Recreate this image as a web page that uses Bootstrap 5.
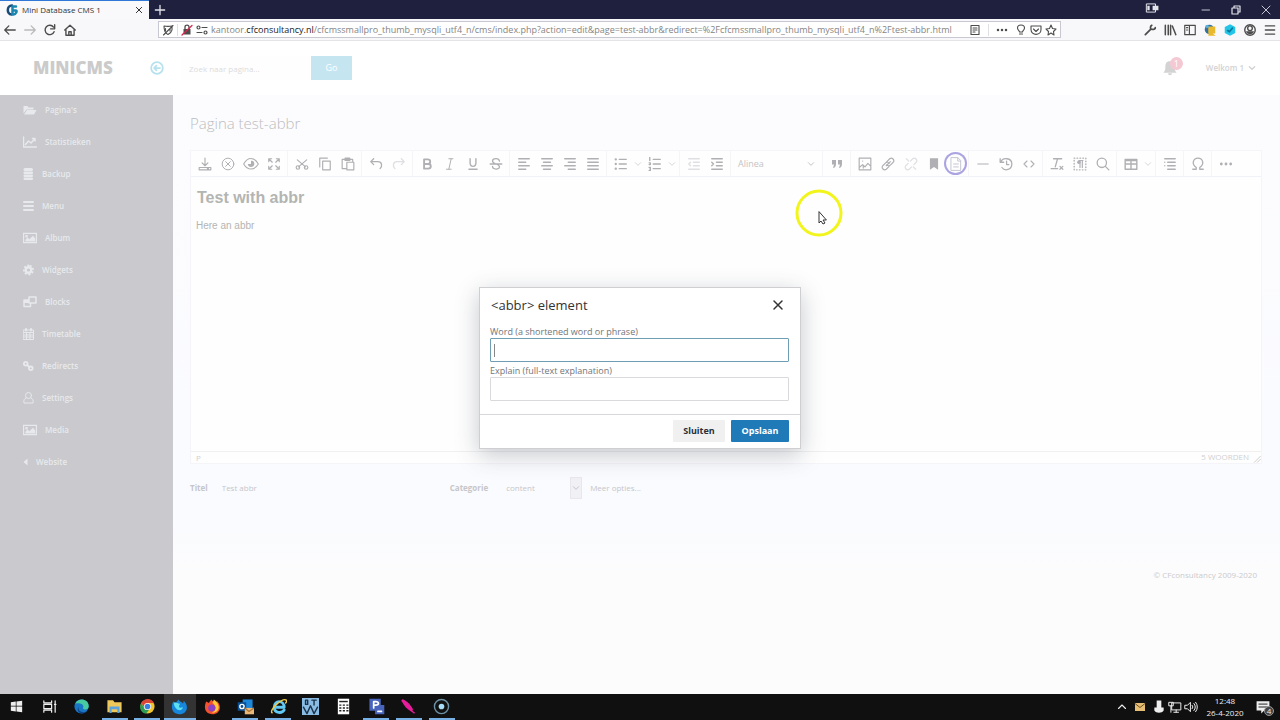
<!DOCTYPE html>
<html lang="nl">
<head>
<meta charset="utf-8">
<meta name="viewport" content="width=device-width, initial-scale=1">
<title>Mini Database CMS 1</title>
<link href="https://cdn.jsdelivr.net/npm/bootstrap@5.3.0/dist/css/bootstrap.min.css" rel="stylesheet">
<style>
body{font:10px/14px "Open Sans","Noto Sans",sans-serif;background:#fcfcfe;color:#444}
button,input,select{font:inherit;color:inherit}
button{background:none;border:0;padding:0;display:inline-flex;align-items:center;justify-content:center}
a{color:inherit;text-decoration:none}
svg{display:block;flex:none;stroke-linecap:round;stroke-linejoin:round}
svg:not([fill]){fill:none}
svg:not([stroke]){stroke:currentColor}
svg:not([stroke-width]){stroke-width:1.7}
svg .solid{fill:currentColor;stroke:none}
.i8{width:8px;height:8px}.i12{width:12px;height:12px}.i14{width:14px;height:14px}.i16{width:16px;height:16px}
/* browser */
.tabstrip{background:#1f203d;height:19px;color:#e4e4ec}
.tab-active{width:149px;background:#f9f9fb;border-top:1px solid #2f78d8;color:#333;font-size:8px;padding:0 6px}
.win-ctl{gap:16px;padding-right:7px}
.win-ctl button{width:14px}
.addressbar{background:#f8f8fa;height:22px;border-bottom:1px solid #e4e4e8;color:#4c4c4c}
.nav-btns{width:158px;gap:6px;padding-left:3px}
.urlbox{width:903px;height:17px;background:#fff;border:1px solid #c8c8d0;gap:3px;padding:0 3px}
.url-text{color:#858585;white-space:nowrap;overflow:hidden;line-height:15px;font-size:9px}
.url-text b{font-weight:400;color:#222}
.addon-btns{gap:6px;padding-right:3px}
.sep{width:1px;height:12px;background:#e0e0e4}
/* cms */
.cms-head{height:54px;background:#fff;color:#d2d2d4}
.brand{width:173px;padding:0 9px 0 33px;font-size:17px;font-weight:800;line-height:20px;color:#cbcbcb}
.find-box{width:130px;height:24px;border:0;background:#fefefe;padding:0 8px;font-size:8px}
.find-box::placeholder{color:#dcdcdc;opacity:1}
.go-btn{width:41px;height:24px;background:#c5e6f1;color:#fff;font-size:9px}
.bell{color:#d3d3d3}
.bell-count{top:-3px;right:-5px;width:13px;height:13px;border-radius:50%;background:#f5c9d4;color:#fff;font-size:9px;line-height:13px;text-align:center}
.welcome{font-size:8px;font-weight:600}
.side{width:173px;background:#c9c9ce;color:#e7e9ed}
.side a{height:32px;padding:0 0 3px 23px;gap:8px;display:flex;align-items:center;font-size:8px;font-weight:600}
.side svg{height:12px}
.w5{width:5px}.w11{width:11px}.w14{width:14px}
.main{padding:0 18px 0 17px;background:linear-gradient(#fcfcfe 0,#fafbfe 350px,#fafbfe 430px,#fcfcfd 480px)}
.page-title{font-size:15px;line-height:20px;font-weight:300;color:#bcbcc0;margin:18px 0 17px}
.editor{background:#fefefe;border:1px solid #f5f5f9}
.tools{height:26px;border-bottom:1px solid #f1f2f7;color:#b0b0b4}
.grp{display:flex;height:25px;padding:0 2px;border-right:1px solid #f5f5f8}
.grp:last-child{border:0}
.grp button{width:23px}
.grp .arr{width:11px;color:#d8d8dc}
.grp .dim{color:#dfdfe3}
.grp .block-pick{width:87px;padding:0 5px;color:#c4c4c8;justify-content:space-between;font-size:9px}
.grp .ring-btn{box-shadow:0 0 0 2px #aba3e2;border-radius:50%;width:19px;height:19px;margin:3px 1px}
.doc-area{min-height:274px;padding:11px 5px;font-family:"Liberation Sans",Arial,sans-serif;color:#b4b4b4}
.doc-area h2{font-size:16px;line-height:20px;font-weight:700;margin:0 0 11px 1px;color:#b3b5b2}
.doc-area p{margin:0;line-height:13px}
.statusbar{height:12px;border-top:1px solid #f0f0f0;color:#d0d0d2;font-size:8px;line-height:12px;padding:0 0 0 5px}
.meta{margin-top:12px;height:24px;color:#c6c6ca;font-size:8px}
.meta label{font-weight:700}
.meta input,.meta select{border:0;background:transparent;outline:0;padding:0 10px}
.meta select{appearance:none}
.meta .title-in{width:238px}.meta .cat-in{width:82px;padding:0 18px}
.cat-arr{width:12px;height:22px;background:#f1f1f5;border:1px solid #e7e7ed}
.foot{color:#cbcbce;font-size:8px;margin-top:68px;padding-right:5px}
/* dialog */
.veil{inset:0;pointer-events:none}
.dlg{width:322px;background:#fff;border:1px solid #cfcfd2;box-shadow:0 6px 22px rgba(50,60,80,.28);pointer-events:auto}
.dlg-head{height:38px;padding:1px 16px 5px 11px;color:#333}
.dlg-head h1{font-size:13px;line-height:18px;font-weight:400;margin:0}
.dlg-body{padding:0 11px 13px 10px;color:#70757b}
.dlg-body label{display:block;font-size:9px;line-height:12px}
.dlg-body input{display:block;width:100%;height:24px;border:1px solid #dadade;border-radius:1px;outline:0;margin-bottom:3px;padding:0 4px}
.dlg-body input:last-child{margin:0}
.dlg-body .active-in{border-color:#6f9db4;caret-color:transparent;background:linear-gradient(#888,#888) 3px 5px/1px 13px no-repeat}
.dlg-foot{border-top:1px solid #d8d8dc;height:34px;padding-right:11px;gap:6px}
.dlg-foot button{height:22px;font-size:9px;font-weight:700;border-radius:1px;color:#2c2f36}
.close-btn{width:52px;background:#f0f0f1}
.dlg-foot .save-btn{width:58px;background:#207ab7;color:#fff}
.halo{left:795px;top:148px}
/* taskbar */
.taskbar{height:26px;background:#101010;color:#eee}
.apps{width:458px}
.apps button{flex:1;border-bottom:2px solid transparent}
.apps svg{width:17px;height:17px}
.apps .run{background:linear-gradient(#76b0e4,#76b0e4) center bottom/26px 2px no-repeat;background-origin:border-box;background-clip:border-box}
.apps .run.cur{background-color:#333;background-size:100% 2px}
.tray{gap:2px;padding-right:10px;font-size:8px}
.clock{width:50px;line-height:12px;text-align:center}
.note-count{right:-4px;bottom:-2px;width:10px;height:10px;border-radius:50%;background:#444;border:1px solid #999;font-size:8px;line-height:8px;text-align:center}
</style>
</head>
<body>
<svg class="d-none">
<symbol id="x" viewBox="0 0 24 24"><path d="M4 4l16 16M20 4L4 20"/></symbol>
<symbol id="down" viewBox="0 0 24 24"><path d="M4 8l8 8 8-8"/></symbol>
<symbol id="pic" viewBox="0 0 24 20"><path class="solid" fill-rule="evenodd" d="M0 1h24v18H0zM2 3v14h20V3zM4 16v-3l4-4 3 3 6-6 4 5v5zM4 5h4v4H4z"/></symbol>
</svg>
<div class="d-flex flex-column min-vh-100">
<header>
 <div class="tabstrip d-flex">
  <div class="tab-active d-flex align-items-center">
   <svg class="i12 me-1" viewBox="0 0 24 24" stroke-width="4"><path stroke="#174a78" stroke-width="5" d="M12 3C1 3 1 21 11 21"/><path stroke="#1b87b0" stroke-width="5" d="M13 21V5h7M14 13h6c3 0 0 8-5 8"/></svg>
   <span class="flex-fill">Mini Database CMS 1</span>
   <button aria-label="Tabblad sluiten"><svg class="i8" stroke-width="3"><use href="#x"/></svg></button>
  </div>
  <button class="px-1" aria-label="Nieuw tabblad"><svg class="i14" viewBox="0 0 24 24" stroke-width="2.2"><path d="M12 4v16M4 12h16"/></svg></button>
  <div class="win-ctl d-flex ms-auto align-items-center">
   <button class="me-4" aria-label="Schermopname"><svg class="i14 mb-1" viewBox="0 0 24 24"><path d="M3 5h15v14H3z"/><path class="solid" d="M13 8h10v8H13zM4 8h4v8H4z"/></svg></button>
   <button aria-label="Minimaliseren"><svg class="i12" viewBox="0 0 24 24"><path d="M4 12h15"/></svg></button>
   <button aria-label="Herstellen"><svg class="i12" viewBox="0 0 24 24" stroke-width="2.4"><path d="M4 8h12v12H4zM8 8V4h12v12h-4"/></svg></button>
   <button aria-label="Sluiten"><svg class="i12"><use href="#x"/></svg></button>
  </div>
 </div>
 <nav class="addressbar d-flex align-items-center">
  <div class="nav-btns d-flex">
   <button aria-label="Terug"><svg class="i14" viewBox="0 0 24 24" stroke-width="2.2"><path d="M21 12H4M10 5l-7 7 7 7"/></svg></button>
   <button aria-label="Vooruit" class="text-black-50 opacity-50"><svg class="i14" viewBox="0 0 24 24" stroke-width="2.2"><path d="M3 12h17M14 5l7 7-7 7"/></svg></button>
   <button aria-label="Vernieuwen"><svg class="i14" viewBox="0 0 24 24" stroke-width="2.4"><path d="M19 15a8 8 0 1 1-1-8M20 3v7h-7"/></svg></button>
   <button aria-label="Startpagina"><svg class="i14" viewBox="0 0 24 24" stroke-width="2.4"><path d="M3 12l9-8 9 8M5 11v10h14V11M10 21v-6h4v6"/></svg></button>
  </div>
  <div class="urlbox d-flex align-items-center">
   <svg class="i12" viewBox="0 0 24 24" stroke-width="2.2"><path d="M4 4c6 1 10 1 16 0v8c-1 5-4 7-8 9-5-2-8-6-8-17M3 22L22 3M7 9v4M16 9v5"/></svg>
   <span class="sep"></span>
   <svg class="i12" viewBox="0 0 24 24"><path class="solid" d="M5 10h14v11H5z"/><path stroke-width="2.6" d="M8 10V6c0-5 8-5 8 0v4"/><path stroke="#d7264c" stroke-width="2.6" d="M2 22L22 3"/></svg>
   <svg class="i12" viewBox="0 0 24 24" stroke-width="2.4"><circle cx="5" cy="7" r="3"/><path d="M12 7h10M2 17h10"/><circle cx="19" cy="17" r="3"/></svg>
   <div class="url-text flex-fill" role="textbox" aria-label="Adres" contenteditable="true" spellcheck="false">kantoor.<b>cfconsultancy.nl</b>/cfcmssmallpro_thumb_mysqli_utf4_n/cms/index.php?action=edit&amp;page=test-abbr&amp;redirect=%2Fcfcmssmallpro_thumb_mysqli_utf4_n%2Ftest-abbr.html</div>
   <svg class="i12" viewBox="0 0 24 24" stroke-width="2.2"><path d="M4 3h16v18H4zM8 8h8M8 12h8M8 16h4"/></svg>
   <span class="sep mx-1"></span>
   <svg class="i12" viewBox="0 0 24 24"><g class="solid"><circle cx="4" cy="12" r="2.5"/><circle cx="12" cy="12" r="2.5"/><circle cx="20" cy="12" r="2.5"/></g></svg>
   <svg class="i12 ms-1" viewBox="0 0 24 24" stroke-width="2.2"><path d="M9 16c0-3-4-4-4-8 0-8 14-8 14 0 0 4-4 5-4 8zM9 20h6"/></svg>
   <svg class="i12" viewBox="0 0 24 24" stroke-width="2.2"><path d="M2 4h20v7c0 13-20 13-20 0zM7 10l5 5 5-5"/></svg>
   <svg class="i12" viewBox="0 0 24 24" stroke-width="2.2"><path d="M12 2l3 7 7 1-5 5 1 7-6-4-6 4 1-7-5-5 7-1z"/></svg>
  </div>
  <div class="addon-btns d-flex ms-auto">
   <button aria-label="Ontwikkelaar"><svg class="i14" viewBox="0 0 24 24"><path stroke-width="3" d="M4 20L13 11"/><path stroke-width="3" d="M15 4c-3 2-3 7 0 7s6-1 6-3"/></svg></button>
   <button aria-label="Bibliotheek"><svg class="i14" viewBox="0 0 24 24" stroke-width="2.6"><path d="M4 4v16M9 4v16M13 4v16M16 5l6 15"/></svg></button>
   <button aria-label="Zijbalk"><svg class="i14" viewBox="0 0 24 24" stroke-width="2"><path d="M3 4h18v16H3zM11 4v16M6 8h2M6 12h2"/></svg></button>
   <button aria-label="Extensie"><svg class="i14" viewBox="0 0 24 24"><circle cx="11" cy="11" r="8" fill="#326fa3" stroke="none"/><path fill="#e9b92d" stroke="none" d="M9 6h12v12H9zM11 14l11 8H9z"/><circle cx="7" cy="6" r="3" fill="#5caed8" stroke="none"/></svg></button>
   <button aria-label="Hexagon"><svg class="i14" viewBox="0 0 24 24"><path fill="#22c4e8" stroke="none" d="M12 2l9 5v10l-9 5-9-5V7z"/><path stroke="#087a9e" stroke-width="3" d="M8 13l3 2 5-6"/></svg></button>
   <button aria-label="Account"><svg class="i14" viewBox="0 0 24 24" stroke-width="2.4"><circle cx="12" cy="12" r="9"/><path class="solid" d="M5 14h14c-2 7-12 7-14 0z"/><circle cx="12" cy="9" r="4"/></svg></button>
   <button aria-label="Menu"><svg class="i14" viewBox="0 0 24 24" stroke-width="2.2"><path d="M4 5h16M4 12h16M4 19h16"/></svg></button>
  </div>
 </nav>
</header>

<div class="position-relative flex-fill d-flex flex-column">
 <div class="cms-head d-flex align-items-center">
  <div class="brand d-flex align-items-center justify-content-between"><span>MINICMS</span>
   <svg class="i14" viewBox="0 0 24 24" stroke="#b6e1ee" stroke-width="3"><circle cx="12" cy="12" r="10"/><path d="M17 12H8M11 8l-4 4 4 4"/></svg></div>
  <form class="d-flex ms-2"><input class="find-box" aria-label="Zoeken" placeholder="Zoek naar pagina..."><button class="go-btn" type="button">Go</button></form>
  <div class="d-flex align-items-center ms-auto me-4">
   <div class="position-relative bell me-4"><svg class="i16" viewBox="0 0 24 24"><path class="solid" d="M12 2c6 0 7 4 7 10 0 3 1 5 3 7H2c2-2 3-4 3-7C5 6 6 2 12 2zM9 20h6c0 4-6 4-6 0z"/></svg><span class="bell-count position-absolute">1</span></div>
   <a href="#" class="welcome d-flex align-items-center gap-1 ps-1">Welkom 1 <svg class="i8" viewBox="0 0 24 24" stroke-width="4"><use href="#down"/></svg></a>
  </div>
 </div>
 <div class="d-flex flex-fill">
  <nav class="side flex-shrink-0">
   <a href="#"><svg class="w14" viewBox="0 0 28 24"><path class="solid" d="M1 4h8l2 3h10v4H7l-6 8zM8 12h19l-5 9H2z"/></svg>Pagina's</a>
   <a href="#"><svg class="w14" viewBox="0 0 28 24" stroke-width="3"><path d="M1 2v20h26M5 17l6-7 5 4 8-9M19 5h5v5"/></svg>Statistieken</a>
   <a href="#"><svg class="w11" viewBox="0 0 22 24"><g class="solid"><rect x="1" y="0" width="19" height="6" rx="3"/><rect x="1" y="7" width="19" height="5" rx="2"/><rect x="1" y="13" width="19" height="5" rx="2"/><rect x="1" y="19" width="19" height="5" rx="2"/></g></svg>Backup</a>
   <a href="#"><svg class="w11" viewBox="0 0 22 24" stroke-width="4"><path d="M2 4h18M2 12h18M2 20h18"/></svg>Menu</a>
   <a href="#"><svg class="w14"><use href="#pic"/></svg>Album</a>
   <a href="#"><svg class="w11" viewBox="0 0 24 24"><circle cx="12" cy="12" r="6" stroke-width="5"/><path stroke-width="4" stroke-dasharray="1 7" d="M12 2a10 10 0 1 0 .1 0"/></svg>Widgets</a>
   <a href="#"><svg class="w14" viewBox="0 0 28 24" stroke-width="3"><path d="M12 2h14v12H12zM12 8H2v13h13v-7"/><path class="solid" d="M2 8h10v6H2z"/></svg>Blocks</a>
   <a href="#"><svg class="w11" viewBox="0 0 22 24" stroke-width="2"><path d="M1 4h20v19H1zM1 9h20M1 14h20M1 18h20M7 9v14M14 9v14"/><path stroke-width="4" d="M6 2v3M16 2v3"/></svg>Timetable</a>
   <a href="#"><svg class="w11" viewBox="0 0 24 24" stroke-width="4"><circle cx="6" cy="7" r="4"/><circle cx="17" cy="17" r="4"/><path d="M9 10l5 4"/></svg>Redirects</a>
   <a href="#"><svg class="w11" viewBox="0 0 22 24" stroke-width="2"><circle cx="11" cy="7" r="6"/><path d="M6 12c-4 1-5 5-4 10h18c1-5 0-9-4-10"/></svg>Settings</a>
   <a href="#"><svg class="w14"><use href="#pic"/></svg>Media</a>
   <a href="#"><svg class="w5" viewBox="0 0 10 24"><path class="solid" d="M9 5v14L1 12z"/></svg>Website</a>
  </nav>
  <main class="main flex-fill">
   <h1 class="page-title">Pagina test-abbr</h1>
   <div class="editor">
    <div class="tools d-flex">
     <div class="grp">
      <button aria-label="Opslaan"><svg class="i14" viewBox="0 0 24 24" stroke-width="2"><path d="M12 2v13M7 10l5 5 5-5M2 18h20v4H2zM16 20h2"/></svg></button>
      <button aria-label="Annuleren"><svg class="i14" viewBox="0 0 24 24"><circle cx="12" cy="12" r="10"/><path d="M8 8l8 8M16 8l-8 8"/></svg></button>
      <button aria-label="Voorbeeld"><svg class="i16" viewBox="0 0 24 24"><path d="M1 12c6-11 16-11 22 0-6 10-16 10-22 0z"/><path class="solid" d="M12 7v5H7c1 7 10 5 10 0s-3-5-5-5z"/></svg></button>
      <button aria-label="Volledig scherm"><svg class="i14" viewBox="0 0 24 24" stroke-width="2"><path d="M3 8V3h5M3 3l6 6M16 3h5v5M21 3l-6 6M3 16v5h5M3 21l6-6M16 21h5v-5M21 21l-6-6"/></svg></button>
     </div>
     <div class="grp">
      <button aria-label="Knippen"><svg class="i14" viewBox="0 0 24 24" stroke-width="2"><path d="M4 5l14 12M20 5L6 17"/><circle cx="5" cy="18" r="3"/><circle cx="19" cy="18" r="3"/></svg></button>
      <button aria-label="Kopiëren"><svg class="i14" viewBox="0 0 24 24" stroke-width="2"><path d="M8 7h13v15H8zM3 17V2h13"/></svg></button>
      <button aria-label="Plakken"><svg class="i14" viewBox="0 0 24 24" stroke-width="2"><path d="M9 20H2V4h18v4M7 2h8v4H7zM10 9h12v13H10z"/></svg></button>
     </div>
     <div class="grp">
      <button aria-label="Ongedaan maken"><svg class="i14" viewBox="0 0 24 24" stroke-width="2.2"><path d="M8 3L3 8l5 5M3 8h12c8 0 8 8 4 12"/></svg></button>
      <button aria-label="Opnieuw" class="dim"><svg class="i14" viewBox="0 0 24 24" stroke-width="2.2"><path d="M16 3l5 5-5 5M21 8H9c-8 0-8 8-4 12"/></svg></button>
     </div>
     <div class="grp">
      <button aria-label="Vet"><svg class="i14" viewBox="0 0 24 24" stroke-width="3.2"><path d="M7 4h6c6 0 6 8 0 8H7zM7 12h7c6 0 6 8 0 8H7z"/></svg></button>
      <button aria-label="Cursief"><svg class="i14" viewBox="0 0 24 24"><path d="M10 3h7M14 3l-4 18M6 21h8"/></svg></button>
      <button aria-label="Onderstrepen"><svg class="i14" viewBox="0 0 24 24" stroke-width="2.4"><path d="M7 3v7c0 8 10 8 10 0V3M5 21h14"/></svg></button>
      <button aria-label="Doorhalen"><svg class="i14" viewBox="0 0 24 24" stroke-width="2.2"><path d="M18 7c-1-6-12-5-12 0 0 3 3 4 6 5s6 2 6 5c0 5-12 5-12-1M2 12h20"/></svg></button>
     </div>
     <div class="grp">
      <button aria-label="Links uitlijnen"><svg class="i14" viewBox="0 0 24 24" stroke-width="2.4"><path d="M3 3h18M3 9h12M3 15h18M3 21h12"/></svg></button>
      <button aria-label="Centreren"><svg class="i14" viewBox="0 0 24 24" stroke-width="2.4"><path d="M3 3h18M6 9h12M3 15h18M6 21h12"/></svg></button>
      <button aria-label="Rechts uitlijnen"><svg class="i14" viewBox="0 0 24 24" stroke-width="2.4"><path d="M3 3h18M9 9h12M3 15h18M9 21h12"/></svg></button>
      <button aria-label="Uitvullen"><svg class="i14" viewBox="0 0 24 24" stroke-width="2.4"><path d="M3 3h18M3 9h18M3 15h18M3 21h18"/></svg></button>
     </div>
     <div class="grp">
      <button aria-label="Opsomming"><svg class="i14" viewBox="0 0 24 24" stroke-width="2.4"><path d="M9 4h12M9 12h12M9 20h12"/><path stroke-width="4" d="M3 4h.1M3 12h.1M3 20h.1"/></svg></button>
      <button class="arr" aria-label="Opsommingsstijl"><svg class="i8" stroke-width="3"><use href="#down"/></svg></button>
      <button aria-label="Nummering"><svg class="i14" viewBox="0 0 24 24" stroke-width="2.4"><path d="M9 4h12M9 12h12M9 20h12M3 1v5M2 10h2v3H2M2 18h2v5H2"/></svg></button>
      <button class="arr" aria-label="Nummerstijl"><svg class="i8" stroke-width="3"><use href="#down"/></svg></button>
     </div>
     <div class="grp">
      <button class="dim" aria-label="Minder inspringen"><svg class="i14" viewBox="0 0 24 24" stroke-width="2.4"><path d="M3 3h18M11 9h10M11 15h10M3 21h18M6 9l-3 3 3 3"/></svg></button>
      <button aria-label="Inspringen"><svg class="i14" viewBox="0 0 24 24" stroke-width="2.4"><path d="M3 3h18M11 9h10M11 15h10M3 21h18M3 9l3 3-3 3"/></svg></button>
     </div>
     <div class="grp"><button class="block-pick">Alinea <svg class="i8" stroke-width="3"><use href="#down"/></svg></button></div>
     <div class="grp"><button aria-label="Citaat"><svg class="i12" viewBox="0 0 24 24"><path class="solid" d="M2 4h8v8c0 5-3 8-6 8l2-7H2zM14 4h8v8c0 5-3 8-6 8l2-7h-4z"/></svg></button></div>
     <div class="grp">
      <button aria-label="Afbeelding"><svg class="i14" viewBox="0 0 24 24" stroke-width="2"><path d="M2 2h20v20H2zM2 18l6-5 4 4 5-6 5 5M8 7h.1M9 14v5"/></svg></button>
      <button aria-label="Link"><svg class="i14" viewBox="0 0 24 24" stroke-width="2"><path d="M9 15l7-7M10 8l5-5c4-3 9 2 6 6l-5 5c-2 2-5 1-6-1M14 16l-5 5c-4 3-9-2-6-6l5-5c2-2 5-1 6 1"/></svg></button>
      <button class="dim" aria-label="Link verwijderen"><svg class="i14" viewBox="0 0 24 24" stroke-width="2"><path d="M11 7l4-4c4-3 9 2 6 6l-4 4M13 17l-4 4c-4 3-9-2-6-6l4-4M4 3l4 4M16 17l4 4"/></svg></button>
      <button aria-label="Bladwijzer"><svg class="i14" viewBox="0 0 24 24"><path class="solid" d="M5 2h14v20l-7-5-7 5z"/></svg></button>
      <button class="ring-btn" aria-label="Afkorting"><svg class="i14" viewBox="0 0 24 24" stroke="#c5c5d2"><path d="M4 1h11l5 5v17H4zM15 1v6h5M8 12h8M8 17h8"/></svg></button>
     </div>
     <div class="grp">
      <button aria-label="Lijn"><svg class="i14" viewBox="0 0 24 24"><path d="M3 12h18"/></svg></button>
      <button aria-label="Herstel concept"><svg class="i14" viewBox="0 0 24 24" stroke-width="2.2"><path d="M2 3v6h6M3 9c3-9 19-8 19 3 0 10-12 13-17 6M13 7v6h4"/></svg></button>
      <button aria-label="Broncode"><svg class="i12" viewBox="0 0 24 24" stroke-width="2.2"><path d="M8 6l-6 6 6 6M16 6l6 6-6 6"/></svg></button>
     </div>
     <div class="grp">
      <button aria-label="Opmaak wissen"><svg class="i14" viewBox="0 0 24 24" stroke-width="2.2"><path d="M6 3h14M13 3L9 17M2 20h11M17 16l5 5M22 16l-5 5"/></svg></button>
      <button aria-label="Blokken tonen"><svg class="i14" viewBox="0 0 24 24"><path stroke-dasharray="1 4" stroke-width="2.4" d="M2 2h20v20H2z"/><path stroke-width="2" d="M12 7v11M16 7v11M10 6h7"/><circle class="solid" cx="10" cy="9" r="3"/></svg></button>
      <button aria-label="Zoeken en vervangen"><svg class="i14" viewBox="0 0 24 24" stroke-width="2.2"><circle cx="10" cy="10" r="8"/><path d="M16 16l6 6"/></svg></button>
     </div>
     <div class="grp">
      <button aria-label="Tabel"><svg class="i14" viewBox="0 0 24 24" stroke-width="2.4"><path d="M2 4h20v17H2zM2 12h20M12 4v17M2 6h20"/></svg></button>
      <button class="arr" aria-label="Tabelopties"><svg class="i8" stroke-width="3"><use href="#down"/></svg></button>
     </div>
     <div class="grp"><button aria-label="Inhoudsopgave"><svg class="i14" viewBox="0 0 24 24" stroke-width="2.2"><path d="M3 3h18M8 9h13M8 15h13M8 21h13M3 9h.1M3 15h.1"/></svg></button></div>
     <div class="grp"><button aria-label="Speciale tekens"><svg class="i14" viewBox="0 0 24 24" stroke-width="2.2"><path d="M3 21h6v-3C0 12 4 2 12 2s12 10 3 16v3h6"/></svg></button></div>
     <div class="grp"><button aria-label="Meer"><svg class="i14" viewBox="0 0 24 24"><g class="solid"><circle cx="4" cy="12" r="2.4"/><circle cx="12" cy="12" r="2.4"/><circle cx="20" cy="12" r="2.4"/></g></svg></button></div>
    </div>
    <div class="doc-area"><h2>Test with abbr</h2><p>Here an abbr</p></div>
    <div class="statusbar d-flex justify-content-between"><span>P</span><span class="d-flex gap-1 align-items-end">5 WOORDEN <svg class="i8" viewBox="0 0 24 24" stroke-width="3"><path d="M4 22L22 4M13 22l9-9"/></svg></span></div>
   </div>
   <form class="meta d-flex align-items-center">
    <label for="t">Titel</label><input class="title-in ms-1" id="t" value="Test abbr">
    <label for="c">Categorie</label><select class="cat-in" id="c"><option>content</option></select>
    <button type="button" class="cat-arr" aria-label="Categorieën tonen"><svg class="i8" stroke-width="3"><use href="#down"/></svg></button>
    <a class="ms-2" href="#">Meer opties...</a>
   </form>
   <footer class="foot text-end">© CFconsultancy 2009-2020</footer>
  </main>
 </div>

 <div class="veil position-absolute d-flex align-items-center justify-content-center">
  <form class="dlg" role="dialog" aria-labelledby="dt">
   <div class="dlg-head d-flex align-items-center justify-content-between"><h1 id="dt">&lt;abbr&gt; element</h1><button type="button" aria-label="Venster sluiten"><svg class="i12" stroke-width="3"><use href="#x"/></svg></button></div>
   <div class="dlg-body">
    <label for="w">Word (a shortened word or phrase)</label><input id="w" class="active-in">
    <label for="e">Explain (full-text explanation)</label><input id="e">
   </div>
   <div class="dlg-foot d-flex align-items-center justify-content-end"><button type="button" class="close-btn">Sluiten</button><button type="button" class="save-btn">Opslaan</button></div>
  </form>
  <svg class="halo position-absolute" width="48" height="48" viewBox="0 0 48 48"><circle cx="24" cy="24" r="22" stroke="#f2f51b" stroke-width="3"/><path fill="#fff" stroke="#333" stroke-width="1" d="M24 23v11l2-2 2 3 2-1-2-3h3z"/></svg>
 </div>
</div>

<footer class="taskbar d-flex">
 <div class="apps d-flex">
  <button aria-label="Start"><svg viewBox="0 0 24 24"><path class="solid" d="M4 6l7-1v6H4zM12 5l8-1v7h-8zM4 12h7v7l-7-1zM12 12h8v8l-8-1z"/></svg></button>
  <button aria-label="Taakweergave"><svg viewBox="0 0 24 24"><path d="M4 4v3h11V4M4 20v-3h11v3M4 9h11v6H4zM20 4v16M19 9h2"/></svg></button>
  <button aria-label="Edge"><svg viewBox="0 0 24 24" stroke="none"><circle cx="12" cy="12" r="10" fill="#1876c5"/><path fill="#48c9a0" d="M3 8C8-2 24 2 22 13c-1 4-7 4-8 1 3-5-5-8-11-6z"/><path fill="#113f80" d="M8 12c-2 6 4 10 11 7-6 6-16 1-11-7z"/></svg></button>
  <button class="run" aria-label="Verkenner"><svg viewBox="0 0 24 24" stroke="none"><path fill="#efc85a" d="M2 3h8l2 3h10v14H2z"/><path fill="#5aa3df" d="M5 12h14v9h-3v-5H8v5H5z"/></svg></button>
  <button class="run" aria-label="Chrome"><svg viewBox="0 0 24 24" stroke="none"><circle cx="12" cy="12" r="10" fill="#f2c42f"/><path fill="#da4637" d="M3 7C8-1 18 0 21 7h-9L8 14z"/><path fill="#2d9c54" d="M3 7l6 10 5 0-4 5C2 21 0 13 3 7z"/><circle cx="12" cy="12" r="5" fill="#fff"/><circle cx="12" cy="12" r="4" fill="#3c7fe0"/></svg></button>
  <button class="run cur" aria-label="Firefox Developer"><svg viewBox="0 0 24 24" stroke="none"><path fill="#1787dd" d="M3 5l4 2c1-3 3-4 4-5 0 3 5 3 6 6l1-4c9 9 3 19-6 19C2 23-1 14 3 5z"/><path fill="#5fe0f1" d="M4 7c4-2 6 2 9 1-3 4-2 7 4 5-3 9-13 2-13-6z"/></svg></button>
  <button aria-label="Firefox"><svg viewBox="0 0 24 24" stroke="none"><path fill="#f3512f" d="M3 5l4 2c1-3 3-4 4-5 0 3 5 3 6 6l1-4c9 9 3 19-6 19C2 23-1 14 3 5z"/><path fill="#ffc936" d="M14 2c10 7 9 19-3 19 8-5 6-10 1-14z"/><circle cx="11" cy="14" r="5" fill="#8a42c8"/></svg></button>
  <button class="run" aria-label="Outlook"><svg viewBox="0 0 24 24" stroke="none"><path fill="#1c86d8" d="M8 2h14v16H8z"/><path fill="#0b4f94" d="M1 6h12v12H1z"/><circle cx="7" cy="12" r="3" stroke="#fff" stroke-width="2"/><path fill="#e9b878" d="M11 14h13v9H11z"/><path stroke="#a87338" d="M11 14l6 5 7-5"/></svg></button>
  <button class="run" aria-label="Internet Explorer"><svg viewBox="0 0 24 24"><path stroke="#62c8f4" stroke-width="4" d="M6 13h14c0-10-14-11-14 0 0 9 11 9 14 4"/><path stroke="#efcb49" stroke-width="2" d="M3 21C-2 17 18-1 23 3c1 1 0 3-1 4"/></svg></button>
  <button aria-label="BTW"><svg viewBox="0 0 24 24"><path fill="#8abbe3" stroke="none" d="M0 0h24v24H0z"/><path stroke="#1b344c" stroke-width="2" d="M2 13l5 9 5-11 5 11 5-9M5 3v6h3V3zM14 3h6M17 3v7"/></svg></button>
  <button aria-label="Rekenmachine"><svg viewBox="0 0 24 24"><path fill="#fff" stroke="none" d="M4 1h16v22H4z"/><g stroke="#222" stroke-width="2" stroke-linecap="butt"><path d="M6 5h12"/><path stroke-dasharray="3 2" d="M6 10h13M6 14h13M6 18h13"/></g></svg></button>
  <button class="run" aria-label="Pspad"><svg viewBox="0 0 24 24"><path fill="#4864bd" stroke="none" d="M2 1h16v17H2zM10 10h13v13H10z"/><path stroke="#fff" stroke-width="2.4" d="M8 14V5h3c5 0 5 5 0 5H8M14 19h5"/></svg></button>
  <button class="run" aria-label="Veer"><svg viewBox="0 0 24 24" stroke="#e81d9b"><path stroke-width="4" d="M4 4l12 12"/><path stroke-width="2" d="M4 4c2 8 8 11 16 17M6 4c6 3 9 7 11 13"/></svg></button>
  <button class="run" aria-label="Opname"><svg viewBox="0 0 24 24" stroke="#6e92a5"><circle cx="12" cy="12" r="10" stroke-width="2"/><circle cx="12" cy="12" r="4" fill="#a6ddf7" stroke="none"/></svg></button>
 </div>
 <div class="tray d-flex ms-auto align-items-center">
  <svg class="i12" viewBox="0 0 24 24" stroke-width="2.2"><path d="M5 15l7-7 7 7"/></svg>
  <svg class="i12 ms-1" viewBox="0 0 24 24"><path fill="#e6be73" stroke="none" d="M2 4h20v16H2z"/><path stroke="#6b4d1f" stroke-width="2" d="M2 5l10 8 10-8"/></svg>
  <svg class="i14 ms-1" viewBox="0 0 24 24"><path class="solid" d="M8 1h8v12h4v5c-3 5-13 5-16 0v-5h4z"/></svg>
  <svg class="i14" viewBox="0 0 24 24"><path d="M7 5h15v12H7zM14 17v4M10 21h8M2 4h7v6H2zM5 10v11"/></svg>
  <svg class="i14" viewBox="0 0 24 24"><path d="M2 9h4l5-5v16l-5-5H2zM14 9q3 3 0 6M17 6q5 6 0 12M20 4q6 8 0 16"/></svg>
  <div class="clock"><div>12:48</div><div>26-4-2020</div></div>
  <button class="position-relative ms-1" aria-label="Meldingen"><svg class="i14" viewBox="0 0 24 24"><path class="solid" d="M1 2h22v16h-9l-5 5v-5H1z"/><path stroke="#222" d="M5 7h14M5 12h14"/></svg><span class="note-count position-absolute">4</span></button>
 </div>
</footer>
</div>
<script src="https://cdn.jsdelivr.net/npm/bootstrap@5.3.0/dist/js/bootstrap.bundle.min.js"></script>
</body>
</html>
